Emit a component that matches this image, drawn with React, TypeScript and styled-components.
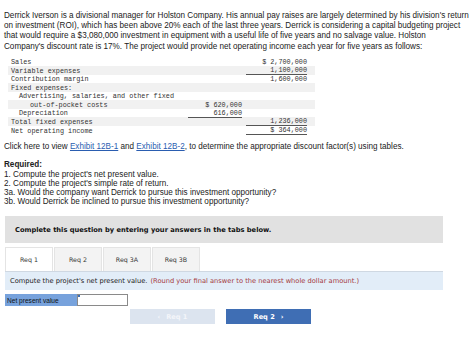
import React from 'react'
import styled, { createGlobalStyle, css } from 'styled-components'

const Global = createGlobalStyle`
  html, body { margin: 0; padding: 0; background: #fff; }
  body { width: 474px; height: 346px; overflow: hidden; }
`

const Page = styled.div`
  padding: 11px 0 0 4px;
  font-family: "Liberation Sans", Arial, sans-serif;
  color: #222;
`

const Para = styled.p`
  margin: 0;
  font-size: 8.15px;
  line-height: 10.2px;
  white-space: nowrap;
`

const Table = styled.div`
  margin: 6px 0 0 4px;
  width: 307px;
  font-family: "Liberation Mono", "Courier New", monospace;
  font-size: 6.8px;
  color: #333;
`

const Row = styled.div<{ $shade?: boolean; $tall?: boolean }>`
  display: grid;
  grid-template-columns: 176px 58px 65px 8px;
  height: ${(p) => (p.$tall ? 9.5 : 8.5)}px;
  align-items: center;
  background: ${(p) => (p.$shade ? '#f1f1f1' : 'transparent')};
`

const Label = styled.div<{ $indent?: number }>`
  padding-left: ${(p) => 3 + (p.$indent || 0)}px;
  white-space: pre;
`

const Amount = styled.div<{ $rule?: boolean }>`
  height: 100%;
  display: flex;
  align-items: center;
  justify-content: flex-end;
  box-sizing: border-box;
  margin-left: 4px;
  ${(p) => p.$rule && css`border-bottom: 1px solid #555;`}
`

const Click = styled.p`
  margin: 7px 0 0;
  font-size: 8.15px;
  line-height: 10px;
`

const Link = styled.a`
  color: #2a5db0;
  text-decoration: underline;
`

const Required = styled.div`
  margin-top: 8px;
  font-size: 8.15px;
  line-height: 9.2px;
`

const Bold = styled.div`
  font-weight: 700;
`

const Panel = styled.div`
  margin: 10px 0 0 1px;
  width: 438px;
  font-family: "DejaVu Sans", Verdana, sans-serif;
`

const Banner = styled.div`
  background: #e1e1e1;
  height: 27px;
  display: flex;
  align-items: center;
  padding-left: 10px;
  font-weight: 700;
  font-size: 6.7px;
  color: #111;
`

const Tabs = styled.div`
  display: flex;
  margin-top: 4px;
  height: 24px;
`

const Tab = styled.div<{ $active?: boolean }>`
  width: 48px;
  margin-right: 1px;
  display: flex;
  align-items: center;
  justify-content: center;
  font-size: 6.3px;
  color: #333;
  box-sizing: border-box;
  border: 1px solid #e4e4e4;
  border-bottom: none;
  background: ${(p) => (p.$active ? '#fff' : '#f3f3f3')};
`

const Prompt = styled.div`
  background: #e2edf8;
  border-top: 1px solid #cfd8e2;
  height: 18px;
  display: flex;
  align-items: center;
  padding-left: 5px;
  font-size: 6.7px;
  color: #222;
`

const Note = styled.span`
  color: #a43a3f;
  margin-left: 3px;
`

const AnswerRow = styled.div`
  display: flex;
  margin-top: 4px;
  height: 11.5px;
`

const AnswerLabel = styled.div`
  width: 72px;
  background: #77a2dc;
  font-family: "Liberation Sans", Arial, sans-serif;
  font-size: 6.6px;
  color: #111;
  display: flex;
  align-items: center;
  padding-left: 2px;
  box-sizing: border-box;
`

const Input = styled.div`
  width: 51px;
  box-sizing: border-box;
  border: 1px solid #8a8a8a;
  background: #fff;
  position: relative;
  &:before {
    content: '';
    position: absolute;
    left: 0;
    top: 0;
    width: 2px;
    height: 2px;
    background: #3d6eb5;
  }
`

const Nav = styled.div`
  display: flex;
  margin: 3px 0 0 125px;
  gap: 11px;
`

const NavButton = styled.div<{ $primary?: boolean }>`
  width: 85px;
  height: 15.5px;
  display: flex;
  align-items: center;
  justify-content: center;
  gap: 6px;
  font-size: 6.6px;
  font-weight: 700;
  background: ${(p) => (p.$primary ? '#3f6eb4' : '#dce4ef')};
  color: ${(p) => (p.$primary ? '#fff' : '#f4f6fa')};
`

const rows = [
  { label: 'Sales', right: '$ 2,700,000' },
  { label: 'Variable expenses', right: '1,100,000', rightRule: true },
  { label: 'Contribution margin', right: '1,600,000' },
  { label: 'Fixed expenses:' },
  { label: 'Advertising, salaries, and other fixed', indent: 8 },
  { label: 'out-of-pocket costs', indent: 19, mid: '$ 620,000' },
  { label: 'Depreciation', indent: 8, mid: '616,000', midRule: true },
  { label: 'Total fixed expenses', right: '1,236,000', rightRule: true },
  { label: 'Net operating income', right: '$ 364,000', rightRule: true, tall: true },
]

export default function App() {
  return (
    <Page>
      <Global />
      <Para>
        Derrick Iverson is a divisional manager for Holston Company. His annual pay raises are largely determined by his division's return
        <br />
        on investment (ROI), which has been above 20% each of the last three years. Derrick is considering a capital budgeting project
        <br />
        that would require a $3,080,000 investment in equipment with a useful life of five years and no salvage value. Holston
        <br />
        Company's discount rate is 17%. The project would provide net operating income each year for five years as follows:
      </Para>
      <Table>
        {rows.map((r, i) => (
          <Row key={r.label} $shade={i % 2 === 1} $tall={r.tall}>
            <Label $indent={r.indent}>{r.label}</Label>
            <Amount $rule={r.midRule}>{r.mid}</Amount>
            <Amount $rule={r.rightRule}>{r.right}</Amount>
            <div />
          </Row>
        ))}
      </Table>
      <Click>
        Click here to view <Link>Exhibit 12B-1</Link> and <Link>Exhibit 12B-2</Link>, to determine the appropriate discount factor(s) using tables.
      </Click>
      <Required>
        <Bold>Required:</Bold>
        <div>1. Compute the project's net present value.</div>
        <div>2. Compute the project's simple rate of return.</div>
        <div>3a. Would the company want Derrick to pursue this investment opportunity?</div>
        <div>3b. Would Derrick be inclined to pursue this investment opportunity?</div>
      </Required>
      <Panel>
        <Banner>Complete this question by entering your answers in the tabs below.</Banner>
        <Tabs>
          <Tab $active>Req 1</Tab>
          <Tab>Req 2</Tab>
          <Tab>Req 3A</Tab>
          <Tab>Req 3B</Tab>
        </Tabs>
        <Prompt>
          Compute the project's net present value.
          <Note>(Round your final answer to the nearest whole dollar amount.)</Note>
        </Prompt>
        <AnswerRow>
          <AnswerLabel>Net present value</AnswerLabel>
          <Input />
        </AnswerRow>
        <Nav>
          <NavButton>
            <span>‹</span>
            <span>Req 1</span>
          </NavButton>
          <NavButton $primary>
            <span>Req 2</span>
            <span>›</span>
          </NavButton>
        </Nav>
      </Panel>
    </Page>
  )
}
